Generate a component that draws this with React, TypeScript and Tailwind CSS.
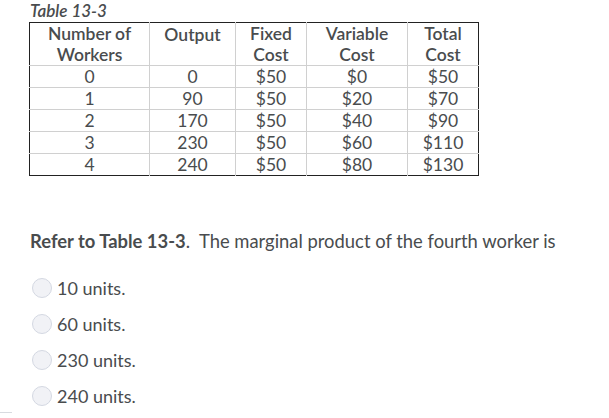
const rows = [
  ["0", "0", "$50", "$0", "$50"],
  ["1", "90", "$50", "$20", "$70"],
  ["2", "170", "$50", "$40", "$90"],
  ["3", "230", "$50", "$60", "$110"],
  ["4", "240", "$50", "$80", "$130"],
];

const options = ["10 units.", "60 units.", "230 units.", "240 units."];

export default function App() {
  return (
    <div className="w-[609px] h-[418px] bg-white text-[#494c4e] font-['Lato','Liberation_Sans',sans-serif] overflow-hidden">
      <div className="pl-[29px]">
        <div className="italic font-semibold text-[17px] leading-[22px] pl-[1px] h-[22px]">Table 13-3</div>

        <table className="border-collapse border border-[#222] text-[17.5px] text-center">
          <thead>
            <tr className="font-semibold leading-[21px]">
              <th className="w-[120px] h-[43px] border-r border-b border-[#d0d0d0] font-semibold">
                Number of
                <br />
                Workers
              </th>
              <th className="w-[86px] align-top pt-[1px] border-r border-b border-[#d0d0d0] font-semibold">Output</th>
              <th className="w-[71px] border-r border-b border-[#d0d0d0] font-semibold">
                Fixed
                <br />
                Cost
              </th>
              <th className="w-[101px] border-r border-b border-[#d0d0d0] font-semibold">
                Variable
                <br />
                Cost
              </th>
              <th className="w-[71px] border-b border-[#d0d0d0] font-semibold">
                Total
                <br />
                Cost
              </th>
            </tr>
          </thead>
          <tbody>
            {rows.map((r, i) => (
              <tr key={i} className="h-[22px] leading-[21px]">
                {r.map((c, j) => (
                  <td
                    key={j}
                    className={`p-0 ${j < 4 ? "border-r" : ""} ${i < 4 ? "border-b" : ""} border-[#d0d0d0]`}
                  >
                    {c}
                  </td>
                ))}
              </tr>
            ))}
          </tbody>
        </table>

        <p className="mt-[53px] text-[18.4px] leading-[24px] pl-[1px]">
          <span className="font-bold">Refer to Table 13-3</span>.&nbsp; The marginal product of the fourth worker is
        </p>

        <div className="mt-[23px] flex flex-col gap-[12px] pl-[3px]">
          {options.map((o) => (
            <label key={o} className="flex items-center gap-[5px] h-[24px] text-[18px]">
              <span className="w-[20px] h-[20px] rounded-full bg-[#f1f2f6] border border-[#d4d8e2] shrink-0" />
              <span>{o}</span>
            </label>
          ))}
        </div>
      </div>
      <div className="mt-[4px] w-[12px] h-px bg-[#d8dbe0]" />
    </div>
  );
}
